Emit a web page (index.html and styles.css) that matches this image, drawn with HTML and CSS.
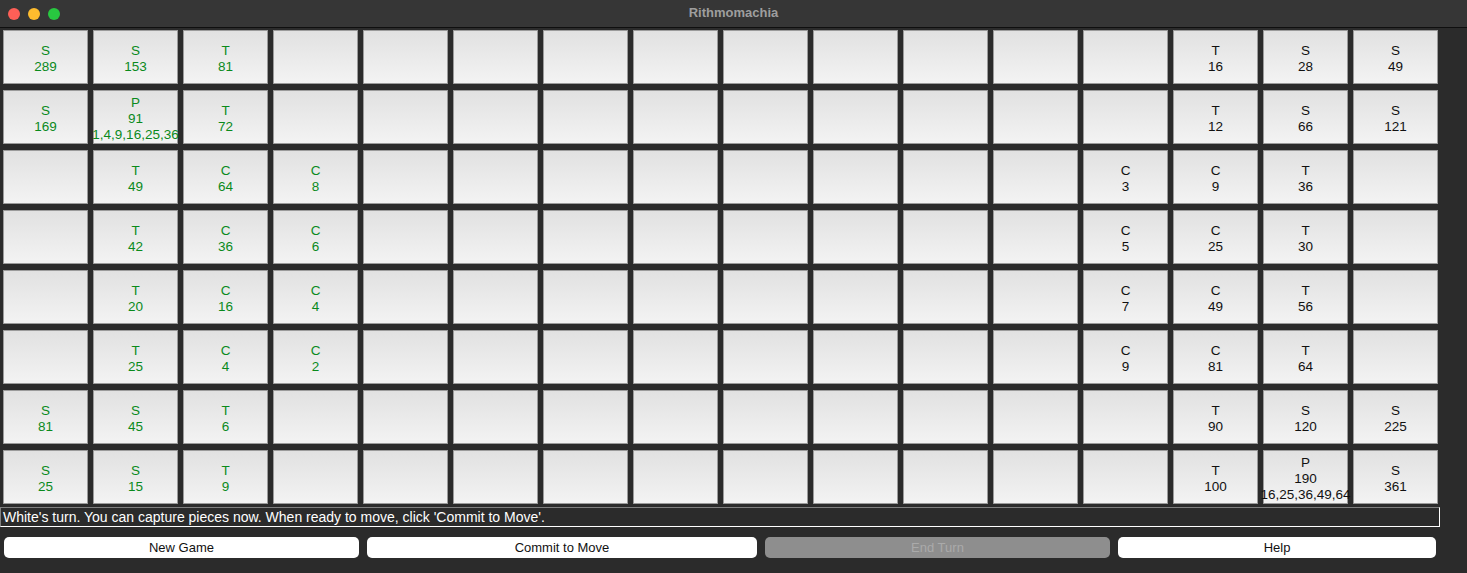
FILE: index.html
```html
<!DOCTYPE html>
<html lang="en">
<head>
  <meta charset="UTF-8">
  <title>Rithmomachia</title>
  <link rel="stylesheet" href="styles.css">
</head>
<body>
  <div class="window">
    <div class="titlebar">
      <span class="light red"></span><span class="light yellow"></span><span class="light green"></span>
      <div class="title">Rithmomachia</div>
    </div>
    <div id="board" class="board"></div>
    <div class="status">White's turn. You can capture pieces now. When ready to move, click 'Commit to Move'.</div>
    <div class="actions">
      <button class="btn">New Game</button>
      <button class="btn">Commit to Move</button>
      <button class="btn" disabled>End Turn</button>
      <button class="btn">Help</button>
    </div>
  </div>
  <script>
    // g = green (black side of the board is plain text)
    const rows = [
      ["gS 289","gS 153","gT 81",0,0,0,0,0,0,0,0,0,0,"bT 16","bS 28","bS 49"],
      ["gS 169","gP 91 1,4,9,16,25,36","gT 72",0,0,0,0,0,0,0,0,0,0,"bT 12","bS 66","bS 121"],
      [0,"gT 49","gC 64","gC 8",0,0,0,0,0,0,0,0,"bC 3","bC 9","bT 36",0],
      [0,"gT 42","gC 36","gC 6",0,0,0,0,0,0,0,0,"bC 5","bC 25","bT 30",0],
      [0,"gT 20","gC 16","gC 4",0,0,0,0,0,0,0,0,"bC 7","bC 49","bT 56",0],
      [0,"gT 25","gC 4","gC 2",0,0,0,0,0,0,0,0,"bC 9","bC 81","bT 64",0],
      ["gS 81","gS 45","gT 6",0,0,0,0,0,0,0,0,0,0,"bT 90","bS 120","bS 225"],
      ["gS 25","gS 15","gT 9",0,0,0,0,0,0,0,0,0,0,"bT 100","bP 190 16,25,36,49,64","bS 361"]
    ];
    const board = document.querySelector('#board');
    rows.forEach(row => {
      row.forEach(p => {
        const cell = document.createElement('div');
        cell.className = 'cell';
        if( p ){
          if( p[0] == 'g' ) cell.classList.add('white');
          const parts = p.slice(1).split(' ');
          parts.forEach(t => {
            const line = document.createElement('span');
            line.textContent = t;
            cell.appendChild(line);
          });
        }
        board.appendChild(cell);
      });
    });
  </script>
</body>
</html>
```
FILE: styles.css
```css
body{ margin:0; padding:0; background:#2b2b2b; font-family:"Liberation Sans", Arial, sans-serif; font-size:13px; }
.window{ height:573px; background:#2b2b2b; display:flex; flex-direction:column; }

.titlebar{
  height:28px; box-sizing:border-box; background:#363636; border-bottom:1px solid #0f0f0f;
  display:flex; align-items:center; gap:8px; padding-left:8px; position:relative;
}
.light{ width:12px; height:12px; border-radius:50%; display:block; }
.red{ background:#fe5f57; }
.yellow{ background:#febc2e; }
.green{ background:#28c840; }
.title{
  position:absolute; left:0; right:0; top:5px; text-align:center;
  color:#9e9e9e; font-weight:bold; font-size:13px;
}

.board{
  margin-top:2px; padding-left:3px;
  display:grid; grid-template-columns:repeat(16, 85px); grid-auto-rows:54px;
  column-gap:5px; row-gap:6px;
}
.cell{
  box-sizing:border-box; border:1px solid #9b9b9b;
  background:linear-gradient(#e1e1e1, #f3f3f3);
  display:flex; flex-direction:column; align-items:center; justify-content:center;
  color:#111; font-size:13.5px; line-height:16px; white-space:nowrap; padding-top:4px;
}
.cell.white{ color:#0a8a1c; }

.status{
  margin-top:3px; width:1440px; height:20px; box-sizing:border-box;
  border:1px solid #fff; border-top-color:#808080; border-left-color:#808080;
  color:#fff; padding-left:2px; line-height:18px; font-size:14px;
}

.actions{
  margin-top:10px; padding-left:4px;
  display:grid; grid-template-columns:355px 390px 345px 318px; column-gap:8px;
}
.btn{
  height:21px; border:none; border-radius:5px; background:#fff; color:#111;
  font-family:"Liberation Sans", Arial, sans-serif; font-size:13px; padding:0;
}
.btn:disabled{ background:#8e8e8e; color:#aaa; }
```
